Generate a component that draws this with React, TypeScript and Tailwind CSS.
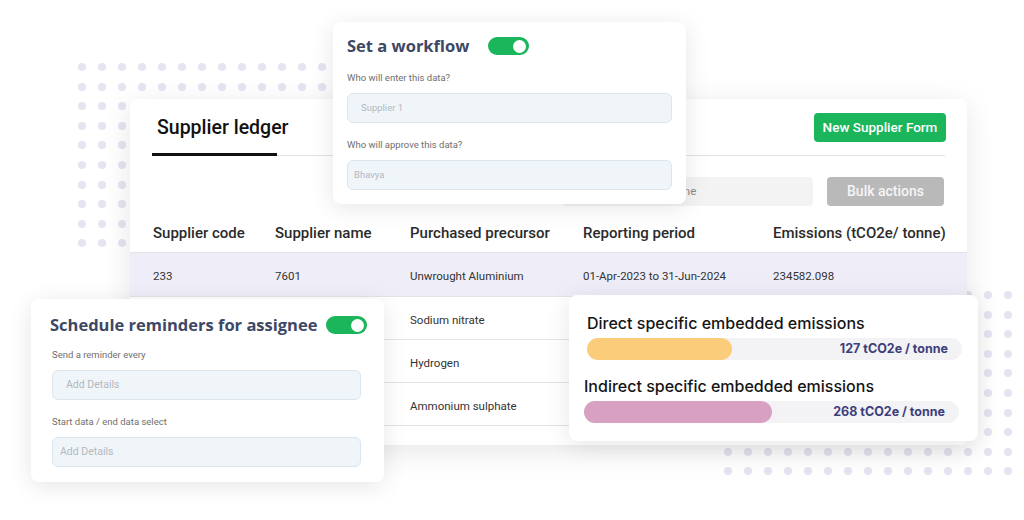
const rows = [
  { code: "233", name: "7601", precursor: "Unwrought Aluminium", period: "01-Apr-2023 to 31-Jun-2024", emissions: "234582.098" },
  { code: "", name: "", precursor: "Sodium nitrate", period: "", emissions: "" },
  { code: "", name: "", precursor: "Hydrogen", period: "", emissions: "" },
  { code: "", name: "", precursor: "Ammonium sulphate", period: "", emissions: "" },
];

function Dots({ cols, rowsCount }: { cols: number; rowsCount: number }) {
  return (
    <div className="grid gap-x-[12px] gap-y-[11.6px]" style={{ gridTemplateColumns: `repeat(${cols}, 8px)` }}>
      {Array.from({ length: cols * rowsCount }).map((_, i) => (
        <div key={i} className="h-2 w-2 rounded-full bg-[#e6e4f1]" />
      ))}
    </div>
  );
}

function Toggle() {
  return (
    <div className="flex h-[18px] w-[41px] shrink-0 items-center justify-end rounded-full bg-[#1bb55c] px-[3px]">
      <div className="h-[13px] w-[13px] rounded-full bg-white" />
    </div>
  );
}

function Field({ label, value, indent, size }: { label: string; value: string; indent: string; size: string }) {
  return (
    <div>
      <p className="text-[9.5px] leading-[14px] text-[#6f6f6f]">{label}</p>
      <div className={`mt-[8px] flex h-[30px] items-center rounded-md border border-[#dbe6ee] bg-[#f0f5f9] text-[#b3b8bf] ${size} ${indent}`}>
        {value}
      </div>
    </div>
  );
}

function Bar({ title, value, fill, width, indent }: { title: string; value: string; fill: string; width: number; indent: string }) {
  return (
    <div className={indent}>
      <p className="text-[16px] font-medium leading-[20px] text-[#151515]">{title}</p>
      <div className="relative mt-[5px] flex h-[22px] w-[375px] items-center justify-end rounded-full bg-[#f3f3f5] pr-[14px]">
        <div className={`absolute left-0 top-0 h-full rounded-full ${fill}`} style={{ width }} />
        <span className="relative text-[12.5px] font-bold text-[#3d3f7c]">{value}</span>
      </div>
    </div>
  );
}

export default function App() {
  return (
    <div className="relative h-[520px] w-[1024px] overflow-hidden bg-white font-['Roboto',sans-serif]">
      <div className="absolute left-[78px] top-[63px]">
        <Dots cols={13} rowsCount={10} />
      </div>
      <div className="absolute left-[724px] top-[291px]">
        <Dots cols={15} rowsCount={10} />
      </div>

      {/* ledger */}
      <div className="absolute left-[130px] top-[99px] h-[346px] w-[837px] rounded-md bg-white shadow-[0_6px_30px_rgba(0,0,0,0.1)]">
        <div className="mt-[14px] flex h-[29px] items-center justify-between pl-[27px] pr-[21px]">
          <h2 className="text-[19.5px] font-medium leading-none text-[#111]">Supplier ledger</h2>
          <button className="h-[29px] w-[132px] rounded-[4px] bg-[#1bb55c] text-[13.5px] font-medium text-white">New Supplier Form</button>
        </div>
        <div className="ml-[22px] mr-[22px] mt-[11px] flex items-end">
          <div className="h-[3px] w-[125px] bg-[#111]" />
          <div className="h-px flex-1 bg-[#e2e2e2]" />
        </div>
        <div className="mt-[21px] flex justify-end gap-[14px] pr-[23px]">
          <div className="flex h-[29px] w-[250px] items-center rounded-[4px] bg-[#f3f3f3] pl-[8px] text-[11.5px] text-[#8a8a8a]">
            Search by supplier name
          </div>
          <button className="h-[29px] w-[117px] rounded-[4px] bg-[#b9b9b9] text-[14px] font-medium text-[#f5f5f5]">Bulk actions</button>
        </div>
        <div className="mt-[5px] grid h-[42px] grid-cols-[122px_135px_173px_190px_1fr] items-center border-b border-[#e4e4e4] pl-[23px] pt-[4px] text-[15px] font-medium text-[#2b2b2b]">
          <span>Supplier code</span>
          <span>Supplier name</span>
          <span>Purchased precursor</span>
          <span>Reporting period</span>
          <span>Emissions (tCO2e/ tonne)</span>
        </div>
        {rows.map((r, i) => (
          <div
            key={i}
            className={`grid grid-cols-[122px_135px_173px_190px_1fr] items-center border-b border-[#e4e4e4] pl-[23px] pt-[5px] text-[11.5px] text-[#333] ${i === 0 ? "h-[44px] bg-[#efeef8]" : "h-[43px]"}`}
          >
            <span>{r.code}</span>
            <span>{r.name}</span>
            <span>{r.precursor}</span>
            <span>{r.period}</span>
            <span>{r.emissions}</span>
          </div>
        ))}
      </div>

      {/* workflow */}
      <div className="absolute left-[333px] top-[22px] h-[182px] w-[353px] rounded-lg bg-white px-[14px] pt-[14px] shadow-[0_4px_24px_rgba(0,0,0,0.1)]">
        <div className="flex h-[20px] items-center gap-[19px]">
          <h3 className="whitespace-nowrap font-['Open_Sans',sans-serif] text-[16.5px] font-bold leading-[20px] text-[#3e4864]">Set a workflow</h3>
          <Toggle />
        </div>
        <div className="mt-[15px] flex flex-col gap-[15px]">
          <Field label="Who will enter this data?" value="Supplier 1" indent="pl-[13px]" size="text-[9.5px]" />
          <Field label="Who will approve this data?" value="Bhavya" indent="pl-[6px]" size="text-[9.5px]" />
        </div>
      </div>

      {/* reminders */}
      <div className="absolute left-[31px] top-[299px] h-[183px] w-[353px] rounded-lg bg-white pl-[21px] pr-[17px] pt-[16px] shadow-[0_4px_24px_rgba(0,0,0,0.1)]">
        <div className="flex h-[20px] items-center justify-between">
          <h3 className="-ml-[2px] whitespace-nowrap font-['Open_Sans',sans-serif] text-[16.5px] font-bold leading-[20px] text-[#3e4864]">Schedule reminders for assignee</h3>
          <Toggle />
        </div>
        <div className="mr-[6px] mt-[13px] flex flex-col gap-[15px]">
          <Field label="Send a reminder every" value="Add Details" indent="pl-[13px]" size="text-[10.5px]" />
          <Field label="Start data / end data select" value="Add Details" indent="pl-[7px]" size="text-[10.5px]" />
        </div>
      </div>

      {/* emissions */}
      <div className="absolute left-[569px] top-[295px] flex h-[146px] w-[409px] flex-col gap-[16px] rounded-lg bg-white pt-[18px] font-['Inter',sans-serif] shadow-[0_4px_24px_rgba(0,0,0,0.1)]">
        <Bar title="Direct specific embedded emissions" value="127 tCO2e / tonne" fill="bg-[#fbcd7b]" width={145} indent="pl-[18px]" />
        <Bar title="Indirect specific embedded emissions" value="268 tCO2e / tonne" fill="bg-[#d8a1c1]" width={188} indent="pl-[15px]" />
      </div>
    </div>
  );
}
